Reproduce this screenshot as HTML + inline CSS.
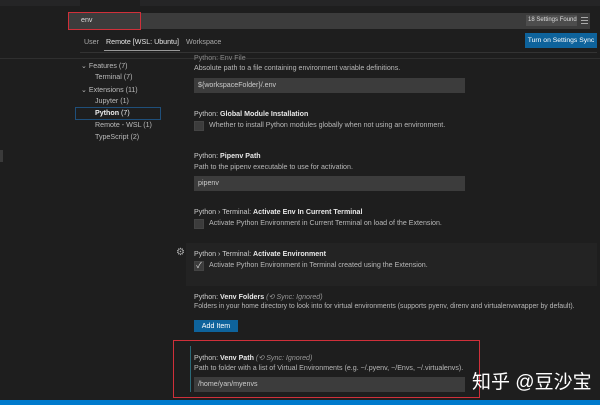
<!DOCTYPE html>
<html><head><meta charset="utf-8"><style>
*{margin:0;padding:0;box-sizing:border-box}
body{width:600px;height:405px;background:#1e1e1e;overflow:hidden;position:relative;font-family:"Liberation Sans","Noto Sans CJK SC",sans-serif;font-size:7.1px;color:#ccc}
.a{position:absolute;white-space:nowrap}
.t{color:#ccc}.t b{color:#e7e7e7}
.d{color:#b8b8b8}
.in{position:absolute;background:#3c3c3c;color:#ccc;padding-left:4px;line-height:15px;height:15px}
.cb{position:absolute;width:10px;height:10px;background:#3c3c3c;border:1px solid #444}
.s{font-style:italic;color:#999;font-weight:normal}
</style></head><body>
<div class="a" style="left:0;top:0;width:600px;height:6px;background:#252526"></div>
<div class="a" style="left:80px;top:0;width:60px;height:6px;background:#1e1e1e"></div>
<div class="in" style="left:68px;top:13px;width:522px;height:16px"></div>
<div class="a" style="left:68px;top:12px;width:73px;height:18px;border:1.5px solid #d0303a"></div>
<div class="a" style="left:81px;top:16px;color:#ddd">env</div>
<div class="a" style="left:526px;top:15px;height:11px;width:51px;background:#4d4d4d;color:#ddd;font-size:6px;line-height:11px;padding-left:2px">18 Settings Found</div>
<div class="a" style="left:581px;top:17px;width:7px;height:1px;background:#aaa;box-shadow:0 3px 0 #aaa,0 6px 0 #aaa"></div>
<div class="a" style="left:84px;top:38px;color:#aaa">User</div>
<div class="a" style="left:106px;top:38px;color:#e7e7e7">Remote [WSL: Ubuntu]</div>
<div class="a" style="left:104px;top:50px;width:76px;height:1px;background:#999"></div>
<div class="a" style="left:186px;top:38px;color:#aaa">Workspace</div>
<div class="a" style="left:80px;top:52px;width:517px;height:1px;background:#333"></div>
<div class="a" style="left:525px;top:33px;width:72px;height:15px;background:#0e639c;color:#fff;line-height:15px;text-align:center;font-size:6.8px">Turn on Settings Sync</div>
<div class="a" style="left:0;top:58px;width:600px;height:1px;background:#2f2f2f"></div>
<div class="a" style="left:0;top:150px;width:3px;height:12px;background:#3a3a3a"></div>
<div class="a" style="left:81px;top:61px;color:#bbb">⌄ Features (7)</div>
<div class="a" style="left:95px;top:73px;color:#bbb">Terminal (7)</div>
<div class="a" style="left:81px;top:85px;color:#bbb">⌄ Extensions (11)</div>
<div class="a" style="left:95px;top:97px;color:#bbb">Jupyter (1)</div>
<div class="a" style="left:75px;top:107px;width:86px;height:13px;border:1px solid #1f4f7a"></div>
<div class="a" style="left:95px;top:109px;color:#eee"><b>Python</b> (7)</div>
<div class="a" style="left:95px;top:121px;color:#bbb">Remote - WSL (1)</div>
<div class="a" style="left:95px;top:133px;color:#bbb">TypeScript (2)</div>

<div class="a t" style="left:194px;top:54px;color:#888">Python: Env File</div>
<div class="a d" style="left:194px;top:64px">Absolute path to a file containing environment variable definitions.</div>
<div class="in" style="left:194px;top:78px;width:271px">${workspaceFolder}/.env</div>
<div class="a t" style="left:194px;top:110px">Python: <b>Global Module Installation</b></div>
<div class="cb" style="left:194px;top:121px"></div>
<div class="a d" style="left:209px;top:121px">Whether to install Python modules globally when not using an environment.</div>
<div class="a t" style="left:194px;top:152px">Python: <b>Pipenv Path</b></div>
<div class="a d" style="left:194px;top:163px">Path to the pipenv executable to use for activation.</div>
<div class="in" style="left:194px;top:176px;width:271px">pipenv</div>
<div class="a t" style="left:194px;top:208px">Python › Terminal: <b>Activate Env In Current Terminal</b></div>
<div class="cb" style="left:194px;top:219px"></div>
<div class="a d" style="left:209px;top:219px">Activate Python Environment in Current Terminal on load of the Extension.</div>
<div class="a" style="left:186px;top:243px;width:411px;height:43px;background:#232323"></div>
<div class="a" style="left:176px;top:247px;color:#aaa;font-size:10px">⚙</div>
<div class="a t" style="left:194px;top:250px">Python › Terminal: <b>Activate Environment</b></div>
<div class="cb" style="left:194px;top:261px;color:#ddd;font-size:8px;line-height:8px;text-align:center">✓</div>
<div class="a d" style="left:209px;top:261px">Activate Python Environment in Terminal created using the Extension.</div>
<div class="a t" style="left:194px;top:292px">Python: <b>Venv Folders</b> <span class="s">(⟲ Sync: Ignored)</span></div>
<div class="a d" style="left:194px;top:303px;font-size:6.9px">Folders in your home directory to look into for virtual environments (supports pyenv, direnv and virtualenvwrapper by default).</div>
<div class="a" style="left:194px;top:320px;width:44px;height:12px;background:#0e639c;color:#fff;line-height:12px;text-align:center">Add Item</div>
<div class="a" style="left:173px;top:340px;width:307px;height:58px;border:1.5px solid #d0303a"></div>
<div class="a" style="left:190px;top:346px;width:1px;height:46px;background:#2a6a78"></div>
<div class="a t" style="left:194px;top:353px">Python: <b>Venv Path</b> <span class="s">(⟲ Sync: Ignored)</span></div>
<div class="a d" style="left:194px;top:364px">Path to folder with a list of Virtual Environments (e.g. ~/.pyenv, ~/Envs, ~/.virtualenvs).</div>
<div class="in" style="left:194px;top:377px;width:271px">/home/yan/myenvs</div>
<div class="a" style="left:472px;top:367px;color:#fff;font-size:19px">知乎 @豆沙宝</div>
<div class="a" style="left:0;top:400px;width:600px;height:5px;background:#007acc"></div>
</body></html>
